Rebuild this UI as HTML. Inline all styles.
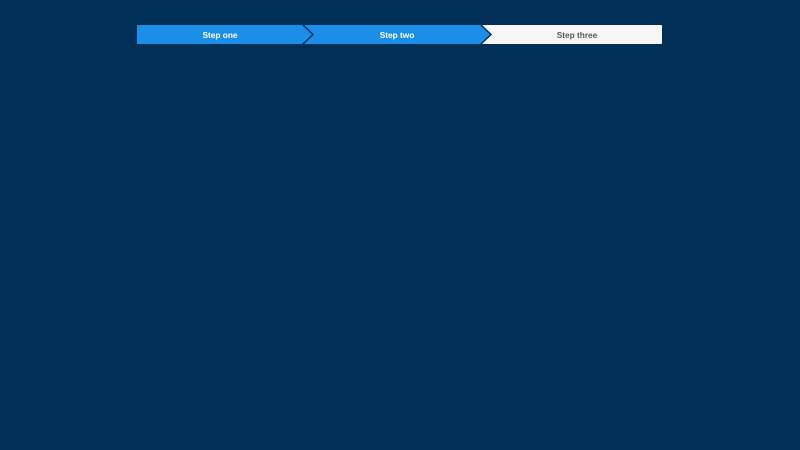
<!DOCTYPE html>
<html><head><style>
body{margin:0;width:800px;height:450px;background:#003057;overflow:hidden;font-family:"Liberation Sans",sans-serif}
svg{position:absolute;left:0;top:0}
</style></head><body>
<svg width="800" height="450">
<rect x="137" y="25" width="525" height="19" fill="#f7f7f7" rx="1"/>
<polygon points="137,25 481,25 491,34.5 481,44 137,44" fill="#1b8fe8"/>
<polyline points="303,25 313,34.5 303,44" fill="none" stroke="#003057" stroke-width="1.5"/>
<polyline points="481,25 491,34.5 481,44" fill="none" stroke="#003057" stroke-width="1.5"/>
<g font-size="8.3" font-weight="bold" text-anchor="middle">
<text x="220" y="38" fill="#fff">Step one</text>
<text x="397" y="38" fill="#fff">Step two</text>
<text x="577" y="38" fill="#555">Step three</text>
</g>
</svg>
</body></html>
